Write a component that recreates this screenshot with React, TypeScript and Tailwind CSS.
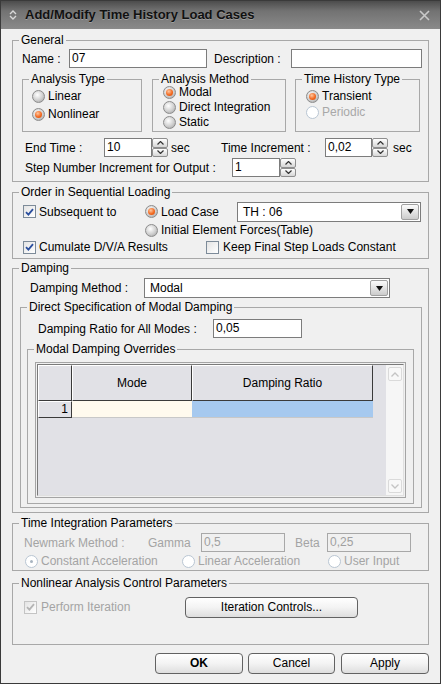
import React from 'react'

type Kids = { children?: React.ReactNode }

function Group({ label, className = '', inner = '', children }: Kids & { label: string; className?: string; inner?: string }) {
  return (
    <fieldset className={`border border-[#a8a8a8] ${className}`}>
      <legend className="ml-[6px] px-[2px] leading-[14px] text-black">{label}</legend>
      <div className={inner}>{children}</div>
    </fieldset>
  )
}

function Radio({ on, disabled }: { on?: boolean; disabled?: boolean }) {
  if (disabled) {
    return (
      <span className="flex h-[13px] w-[13px] shrink-0 items-center justify-center rounded-full border border-[#b9c6d3] bg-white">
        {on && <span className="h-[3px] w-[3px] rounded-full bg-[#a8b4c0]" />}
      </span>
    )
  }
  return (
    <span className="flex h-[13px] w-[13px] shrink-0 items-center justify-center rounded-full border border-[#8c8c8c] bg-[radial-gradient(circle_at_40%_35%,#ffffff,#cfcfcf_55%,#9c9c9c)]">
      {on && <span className="h-[7px] w-[7px] rounded-full bg-[radial-gradient(circle_at_40%_35%,#ffc8a0,#f26a22_55%,#d24a08)]" />}
    </span>
  )
}

function Check({ on, disabled }: { on?: boolean; disabled?: boolean }) {
  return (
    <span
      className={`flex h-[13px] w-[13px] shrink-0 items-center justify-center border bg-[linear-gradient(135deg,#e4e4e4,#ffffff)] ${
        disabled ? 'border-[#c4c4c4]' : 'border-[#7d8b99]'
      }`}
    >
      {on && (
        <svg width="9" height="8" viewBox="0 0 9 8">
          <path d="M1 4.2 3.4 6.6 8 1.2" fill="none" stroke={disabled ? '#b4b4b4' : '#2b4f9e'} strokeWidth="1.8" />
        </svg>
      )}
    </span>
  )
}

function SpinBtn({ up }: { up?: boolean }) {
  return (
    <span className="flex flex-1 items-center justify-center rounded-[2px] border border-[#8e8e8e] bg-[linear-gradient(#ffffff,#d6d6d6)]">
      <svg width="7" height="4" viewBox="0 0 7 4">
        <path d={up ? 'M0.5 3.5 3.5 0.5 6.5 3.5' : 'M0.5 0.5 3.5 3.5 6.5 0.5'} fill="none" stroke="#333" strokeWidth="1.2" />
      </svg>
    </span>
  )
}

function Spin() {
  return (
    <span className="flex h-[19px] w-[16px] shrink-0 flex-col">
      <SpinBtn up />
      <SpinBtn />
    </span>
  )
}

function Field({ value, className = '', disabled }: { value?: string; className?: string; disabled?: boolean }) {
  return (
    <span
      className={`block h-[19px] shrink-0 border pl-[2px] leading-[17px] ${
        disabled ? 'border-[#a8a8a8] bg-[#f0f0f0] text-[#a0a0a0]' : 'border-[#7c7c7c] bg-white'
      } ${className}`}
    >
      {value}
    </span>
  )
}

function Select({ value, className = '' }: { value: string; className?: string }) {
  return (
    <span className={`flex h-[20px] shrink-0 border border-[#7c7c7c] bg-white ${className}`}>
      <span className="flex-1 pl-[5px] leading-[18px]">{value}</span>
      <span className="m-px flex w-[18px] items-center justify-center rounded-[2px] border border-[#a0a0a0] bg-[linear-gradient(#fbfbfb,#cccccc)]">
        <svg width="7" height="5" viewBox="0 0 7 5">
          <path d="M0 0H7L3.5 5Z" fill="#111" />
        </svg>
      </span>
    </span>
  )
}

function Btn({ children, className = '' }: Kids & { className?: string }) {
  return (
    <button className={`h-[21px] shrink-0 rounded-[4px] border border-[#626262] bg-[linear-gradient(#ffffff,#f3f3f3_50%,#dedede)] leading-[19px] text-black ${className}`}>
      {children}
    </button>
  )
}

function Row({ children, className = '' }: Kids & { className?: string }) {
  return <div className={`flex items-center whitespace-nowrap ${className}`}>{children}</div>
}

function ScrollArrow({ up }: { up?: boolean }) {
  return (
    <span className="mx-auto flex h-[14px] w-[14px] items-center justify-center rounded-[2px] border border-[#dadada] bg-[#f8f8f8]">
      <svg width="8" height="5" viewBox="0 0 8 5">
        <path d={up ? 'M0.5 4.5 4 1 7.5 4.5' : 'M0.5 0.5 4 4 7.5 0.5'} fill="none" stroke="#c4c4c4" strokeWidth="1.3" />
      </svg>
    </span>
  )
}

function DampingTable() {
  return (
    <div className="mt-[6px] flex h-[136px] w-[371px] border border-[#a4a4a4] p-px">
      <div className="flex flex-1 border border-t-[#7a7a7a] border-l-[#7a7a7a] border-r-[#e0e0e0] border-b-[#e0e0e0]">
        <div className="flex-1 bg-[#e1e1e6]">
          <div className="flex h-[36px]">
            <div className="w-[34px] border-t border-l border-r border-b border-t-white border-l-white border-r-[#3a3a3a] border-b-[#3a3a3a]" />
            <div className="flex w-[120px] items-center justify-center border-t border-l border-r border-b border-t-white border-l-white border-r-[#3a3a3a] border-b-[#3a3a3a]">
              Mode
            </div>
            <div className="flex w-[181px] items-center justify-center border-t border-l border-r border-b border-t-white border-l-white border-r-[#3a3a3a] border-b-[#3a3a3a]">
              Damping Ratio
            </div>
          </div>
          <div className="flex h-[17px]">
            <div className="w-[34px] border-t border-l border-r border-b border-t-white border-l-white border-r-[#3a3a3a] border-b-[#3a3a3a] pr-[3px] text-right leading-[14px]">
              1
            </div>
            <div className="w-[120px] border-b border-[#c8c8c8] bg-[#fffaee]" />
            <div className="w-[181px] border-b border-[#c8c8c8] bg-[#a6c9ef]" />
          </div>
        </div>
        <div className="flex w-[17px] flex-col justify-between bg-[#f6f6f6] py-[2px]">
          <ScrollArrow up />
          <ScrollArrow />
        </div>
      </div>
    </div>
  )
}

export default function App() {
  return (
    <div className="flex h-[684px] w-[441px] flex-col border border-[#3a3a3a] bg-[#f0f0f0] font-['Liberation_Sans',Arial,sans-serif] text-[12px] leading-[14px] text-black">
      <div className="flex h-[28px] shrink-0 items-center bg-[linear-gradient(#4c4c4c,#727272_35%,#8a8a8a)] pl-[8px] pr-[10px]">
        <svg width="8" height="10" viewBox="0 0 8 10" className="mr-[8px]">
          <path d="M1 4 4 1 7 4M1 6 4 9 7 6" fill="none" stroke="#d8d8d8" strokeWidth="1.4" />
        </svg>
        <span className="flex-1 text-[13px] font-bold text-[#111] [text-shadow:0_1px_0_rgba(255,255,255,0.25)]">
          Add/Modify Time History Load Cases
        </span>
        <svg width="11" height="11" viewBox="0 0 11 11">
          <path d="M1 1 10 10M10 1 1 10" stroke="#c9c9c9" strokeWidth="1.6" />
        </svg>
      </div>

      <div className="flex flex-1 flex-col px-[11px]">
        <Group label="General" className="mt-[4px]" inner="pl-[9px] pb-[4px]">
          <Row className="mt-[2px] h-[19px]">
            <span className="w-[47px]">Name :</span>
            <Field value="07" className="w-[138px]" />
            <span className="ml-[7px] w-[77px]">Description :</span>
            <Field className="w-[131px]" />
          </Row>
          <div className="mt-[4px] flex">
            <Group label="Analysis Type" className="h-[60px] w-[120px]" inner="pl-[9px]">
              <Row className="mt-[3px] h-[14px] gap-[3px]">
                <Radio /> Linear
              </Row>
              <Row className="mt-[4px] h-[14px] gap-[3px]">
                <Radio on /> Nonlinear
              </Row>
            </Group>
            <Group label="Analysis Method" className="ml-[10px] h-[60px] w-[134px]" inner="pl-[10px]">
              <Row className="-mt-[1px] h-[14px] gap-[3px]">
                <Radio on /> Modal
              </Row>
              <Row className="mt-[1px] h-[14px] gap-[3px]">
                <Radio /> Direct Integration
              </Row>
              <Row className="mt-[1px] h-[14px] gap-[3px]">
                <Radio /> Static
              </Row>
            </Group>
            <Group label="Time History Type" className="ml-[9px] h-[60px] w-[125px]" inner="pl-[10px]">
              <Row className="mt-[3px] h-[14px] gap-[3px]">
                <Radio on /> Transient
              </Row>
              <Row className="mt-[2px] h-[14px] gap-[3px] text-[#a8a8a8]">
                <Radio disabled /> Periodic
              </Row>
            </Group>
          </div>
          <Row className="mt-[6px] h-[19px]">
            <span className="w-[82px] pl-[3px]">End Time :</span>
            <Field value="10" className="w-[48px]" />
            <Spin />
            <span className="w-[53px] pl-[3px]">sec</span>
            <span className="w-[104px]">Time Increment :</span>
            <Field value="0,02" className="w-[47px]" />
            <Spin />
            <span className="pl-[5px]">sec</span>
          </Row>
          <Row className="mt-[1px] h-[19px]">
            <span className="w-[210px] pl-[3px]">Step Number Increment for Output :</span>
            <Field value="1" className="w-[48px]" />
            <Spin />
          </Row>
        </Group>

        <Group label="Order in Sequential Loading" className="mt-[3px]" inner="pl-[10px] pb-[4px]">
          <Row className="mt-[3px] h-[19px]">
            <span className="flex w-[122px] items-center gap-[3px]">
              <Check on /> Subsequent to
            </span>
            <span className="flex w-[92px] items-center gap-[3px]">
              <Radio on /> Load Case
            </span>
            <Select value="TH : 06" className="w-[184px]" />
          </Row>
          <Row className="mt-[2px] h-[14px] gap-[3px] pl-[122px]">
            <Radio /> Initial Element Forces(Table)
          </Row>
          <Row className="mt-[3px] h-[14px]">
            <span className="flex w-[183px] items-center gap-[3px]">
              <Check on /> Cumulate D/V/A Results
            </span>
            <span className="flex items-center gap-[4px]">
              <Check /> Keep Final Step Loads Constant
            </span>
          </Row>
        </Group>

        <Group label="Damping" className="mt-[2px]" inner="pl-[7px] pr-[6px] pb-[4px]">
          <Row className="mt-[3px] h-[20px]">
            <span className="ml-[10px] w-[114px]">Damping Method :</span>
            <Select value="Modal" className="w-[246px]" />
          </Row>
          <Group label="Direct Specification of Modal Damping" className="mt-[2px]" inner="pl-[6px] pr-[7px] pb-[3px]">
            <Row className="mt-[5px] h-[19px]">
              <span className="ml-[11px] w-[175px]">Damping Ratio for All Modes :</span>
              <Field value="0,05" className="w-[89px]" />
            </Row>
            <Group label="Modal Damping Overrides" className="mt-[4px]" inner="pl-[7px] pr-[7px] pb-[5px]">
              <DampingTable />
            </Group>
          </Group>
        </Group>

        <Group label="Time Integration Parameters" className="mt-[3px]" inner="pl-[11px] pb-[2px] text-[#a4a4a4]">
          <Row className="mt-[3px] h-[19px]">
            <span className="w-[124px]">Newmark Method :</span>
            <span className="w-[53px]">Gamma</span>
            <Field value="0,5" disabled className="w-[84px]" />
            <span className="w-[42px] pl-[10px]">Beta</span>
            <Field value="0,25" disabled className="w-[84px]" />
          </Row>
          <Row className="mt-[2px] h-[14px] pl-[1px]">
            <span className="flex w-[157px] items-center gap-[3px]">
              <Radio on disabled /> Constant Acceleration
            </span>
            <span className="flex w-[146px] items-center gap-[3px]">
              <Radio disabled /> Linear Acceleration
            </span>
            <span className="flex items-center gap-[3px]">
              <Radio disabled /> User Input
            </span>
          </Row>
        </Group>

        <Group label="Nonlinear Analysis Control Parameters" className="mt-[5px]" inner="pl-[11px] pb-[27px]">
          <Row className="mt-[7px] h-[20px]">
            <span className="flex w-[161px] items-center gap-[4px] text-[#a4a4a4]">
              <Check on disabled /> Perform Iteration
            </span>
            <Btn className="w-[173px]">Iteration Controls...</Btn>
          </Row>
        </Group>

        <div className="mt-[8px] flex justify-end">
          <Btn className="w-[88px] font-bold">OK</Btn>
          <Btn className="ml-[5px] w-[87px]">Cancel</Btn>
          <Btn className="ml-[6px] w-[88px]">Apply</Btn>
        </div>
      </div>
    </div>
  )
}
